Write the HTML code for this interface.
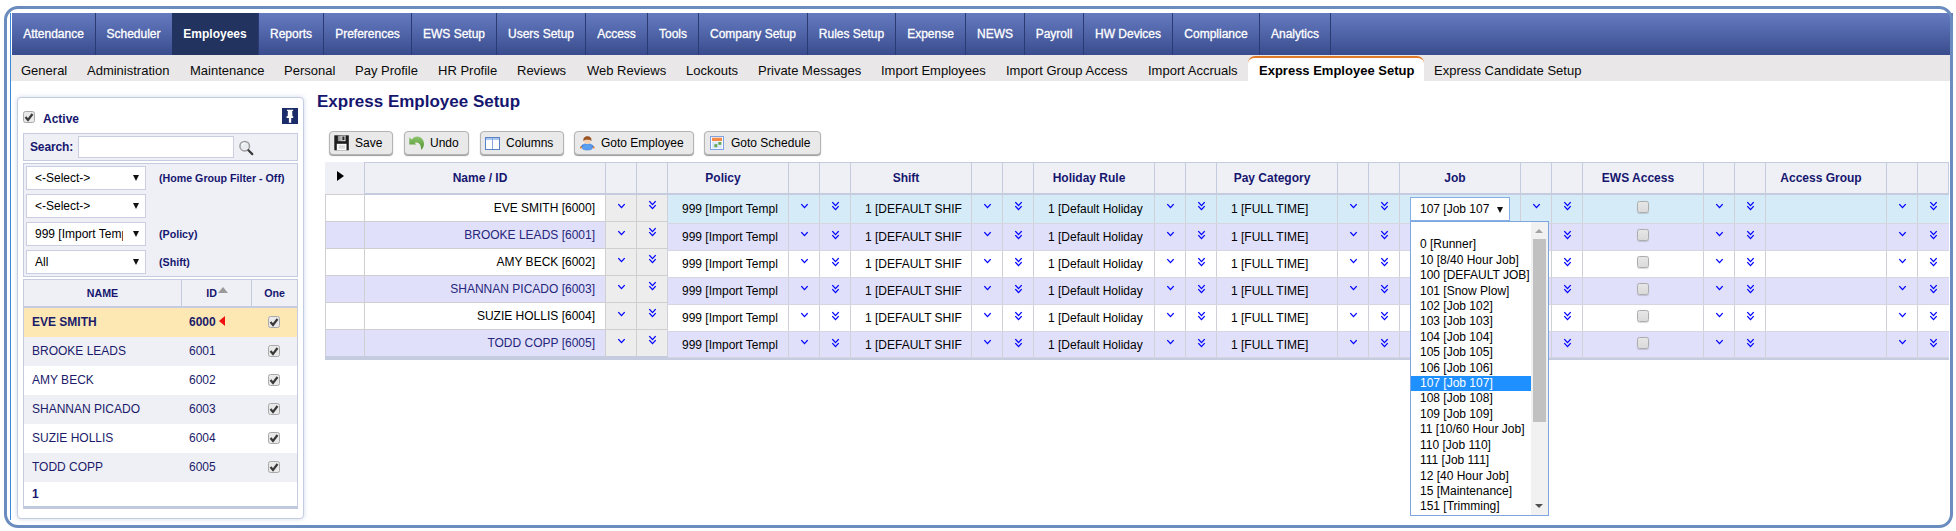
<!DOCTYPE html><html><head><meta charset="utf-8"><title>Express Employee Setup</title><style>html,body{margin:0;padding:0;background:#fff;}
body{width:1956px;height:531px;overflow:hidden;position:relative;font-family:"Liberation Sans",Arial,sans-serif;font-size:12px;color:#222;}
div,span,i,b{box-sizing:border-box;}
#frame{position:absolute;left:4px;top:6px;width:1949px;height:522px;border:3px solid #6b8cbf;border-radius:14px;z-index:50;pointer-events:none;}
#inline{position:absolute;left:10px;top:13px;width:1px;height:507px;background:#3a8ad8;}
#nav{position:absolute;left:12px;top:13px;width:1941px;height:42px;background:linear-gradient(#667bbf,#5468ad 40%,#394c8d);}
#nav div{position:absolute;top:0;height:42px;line-height:42px;text-align:center;color:#fff;font-size:12px;-webkit-text-stroke:0.3px #fff;border-right:1px solid #2a3a73;box-sizing:content-box;}
#nav div.on{background:#22335f;font-weight:bold;-webkit-text-stroke:0;}
#sub{position:absolute;left:11px;top:55px;width:1939px;height:26px;background:#e9e7e7;}
#sub span{position:absolute;top:2px;line-height:27px;font-size:13px;color:#0a0a0a;white-space:nowrap;}
#sub span.b{font-weight:bold;color:#000;}
#sub .act{position:absolute;left:1237px;top:1px;width:176px;height:25px;background:#fff;border-top:2px solid #e17a26;border-radius:7px 7px 0 0;}
#title{position:absolute;left:317px;top:91px;font-size:17px;font-weight:bold;color:#16166f;line-height:22px;white-space:nowrap;}
/* left panel */
#panel{position:absolute;left:17px;top:97px;width:287px;height:422px;border:1px solid #c3cce0;border-radius:4px;box-shadow:0 0 5px rgba(170,182,212,0.55);background:#fff;}
.navy{color:#16166f;font-weight:bold;}
#act{position:absolute;left:43px;top:112px;line-height:15px;font-size:12px;}
#actcb{position:absolute;left:23px;top:111px;}
#pin{position:absolute;left:282px;top:108px;width:16px;height:16px;background:#1c2c6a;}
#srch{position:absolute;left:23px;top:133px;width:275px;height:28px;background:#eff0f6;border:1px solid #c5cce0;}
#srch span{position:absolute;left:6px;top:6px;line-height:15px;letter-spacing:-0.15px;}
#srch .in{position:absolute;left:54px;top:2px;width:156px;height:22px;background:#fff;border:1px solid #c9cfe0;}
#filt{position:absolute;left:23px;top:163px;width:275px;height:114px;background:#eff0f6;border:1px solid #c5cce0;}
.sel1{position:absolute;left:2px;width:120px;height:24px;background:#fff;border:1px solid #c9cfe0;font-size:12px;line-height:23px;padding-left:8px;color:#000;white-space:nowrap;overflow:hidden;}
.sel1 i{position:absolute;right:6px;top:8px;width:0;height:0;border-left:3.5px solid transparent;border-right:3.5px solid transparent;border-top:6px solid #111;}
.sel1 u{position:absolute;right:13px;top:0;width:9px;height:21px;background:#fff;}
.flab{position:absolute;left:135px;font-size:8pt;line-height:14px;white-space:nowrap;}
#list{position:absolute;left:23px;top:279px;width:275px;height:230px;border:1px solid #c5cce0;border-bottom:3px solid #c0c9dd;background:#fff;}
.lh{position:absolute;left:0;top:0;width:273px;height:28px;background:#eff0f6;border-bottom:2px solid #c5cce0;font-size:8pt;font-weight:bold;color:#16166f;}
.lh div{position:absolute;top:0;height:26px;line-height:27px;text-align:center;border-right:1px solid #c5cce0;}
.lh .c1{left:0;width:158px;}
.lh .c2{left:158px;width:70px;}
.lh .c3{left:228px;width:45px;border-right:0;}
.lh .up{display:inline-block;width:0;height:0;border-left:5px solid transparent;border-right:5px solid transparent;border-bottom:6px solid #9a9a9a;position:relative;top:-4px;left:1px;}
.lr{position:absolute;left:0;width:273px;height:29px;line-height:29px;font-size:12px;color:#1b1b6a;}
.lr.alt{background:#eff0f6;}
.lr.sel{background:#fde8b4;font-weight:bold;}
.lr .n{position:absolute;left:8px;white-space:nowrap;}
.lr .d{position:absolute;left:165px;}
.lr .ck{position:absolute;left:244px;top:0;}
.lr .chk{position:absolute;top:8px;left:0;}
.lr .red{display:inline-block;width:0;height:0;border-top:5.5px solid transparent;border-bottom:5.5px solid transparent;border-right:6px solid #f01010;position:relative;top:-0.5px;left:3px;}
.lf{position:absolute;left:8px;top:202px;line-height:24px;font-weight:bold;color:#16166f;}
/* toolbar */
.btn{position:absolute;top:131px;height:24px;background:#e9e9e9;border:1px solid #b4b4b4;border-radius:4px;box-shadow:0 1px 1px #9a9a9a;font-size:12px;line-height:22px;color:#000;white-space:nowrap;}
.btn span{position:absolute;top:0;}
.btn svg{position:absolute;}
/* grid */
#grid{position:absolute;left:325px;top:162px;width:1624px;height:200px;}
.gh{position:absolute;top:0;height:33px;background:#eff0f6;border-left:1px solid #c5cce0;border-top:1px solid #c5cce0;border-bottom:2px solid #c5cce0;text-align:center;font-weight:bold;color:#16166f;line-height:30px;font-size:12px;padding-right:10px;}
.ghend{position:absolute;left:1623px;top:0;width:1px;height:33px;background:#c5cce0;}
.tri{position:absolute;left:12px;top:9px;width:0;height:0;border-top:5.5px solid transparent;border-bottom:5.5px solid transparent;border-left:7px solid #000;}
.lrow{position:absolute;left:0;width:342px;height:27px;}
.lrow div{position:absolute;top:0;height:27px;border-left:1px solid #cfcfd2;border-bottom:1px solid #cfcfd2;background:#fff;}
.lrow.alt div{background:#e0e0fb;}
.lrow .a0{left:0;width:39px;}
.lrow .a1{left:39px;width:241px;text-align:right;padding-right:10px;line-height:27px;color:#000;white-space:nowrap;}
.lrow.alt .a1{color:#26267a;}
.lrow .a2{left:280px;width:31px;background:#ededed !important;}
.lrow .a3{left:311px;width:31px;background:#ededed !important;}
.ch{position:absolute;left:11px;top:8px;}
.ch2{position:absolute;left:11px;top:5.4px;}
.rrow{position:absolute;left:342px;width:1282px;background:#fff;border-bottom:1px solid #d6d6e2;}
.rrow.alt{background:#e0e0fb;}
.rrow.sel{background:#d5ecf8;}
.rrow .m{position:absolute;top:0;bottom:0;width:121px;border-left:1px solid #d0d0d8;}
.rrow .c{position:absolute;top:0;bottom:0;width:31px;border-left:1px solid #d0d0d8;}
.rrow .c .ch{top:7.2px;}
.rrow.sel .c .ch{top:8.2px;}
.rrow .c .ch2{top:5.5px;}
.rrow.sel .c .ch2{top:6.4px;}
.rrow .v{position:absolute;left:14px;top:5px;width:97px;overflow:hidden;white-space:nowrap;line-height:16px;color:#000;}
.cb{position:absolute;left:54px;top:5px;width:12px;height:12px;border:1px solid #adadad;border-radius:2.500px;background:linear-gradient(#e6e6e6,#dadada);box-shadow:0 0.5px 1px rgba(0,0,0,0.15);}
.gbot{position:absolute;left:0;top:194px;width:343px;height:4px;background:#c5cce0;}
.gbot2{position:absolute;left:342px;top:196px;width:1282px;height:2px;background:#c5cce0;}
/* job select */
#jobsel{position:absolute;left:1410px;top:197px;width:100px;height:24px;background:#fff;border:1px solid #86aee6;font-size:12px;line-height:22px;color:#000;white-space:nowrap;overflow:hidden;}
#jobsel span{position:absolute;left:9px;top:0;}
#jobsel i{position:absolute;right:6px;top:9px;width:0;height:0;border-left:3.5px solid transparent;border-right:3.5px solid transparent;border-top:6px solid #111;}
#dd{position:absolute;left:1410px;top:221px;width:139px;height:295px;background:#fff;border:1px solid #7ea6de;z-index:60;}
#dd .opts{position:absolute;left:0;top:0px;width:121px;}
#dd .opts div{height:15.41px;line-height:15.41px;padding-left:9px;color:#000;white-space:nowrap;font-size:12px;}
#dd .opts div.hi{background:#1e90ff;color:#fff;}
#dd .sb{position:absolute;right:0;top:0;width:17px;height:293px;background:#f1f1f1;}
#dd .sb b{position:absolute;left:2px;top:17px;width:13px;height:183px;background:#c1c1c1;}
#dd .sb .u{position:absolute;left:4px;top:7px;width:0;height:0;border-left:4px solid transparent;border-right:4px solid transparent;border-bottom:4px solid #a3a3a3;}
#dd .sb .dn{position:absolute;left:4px;bottom:7px;width:0;height:0;border-left:4px solid transparent;border-right:4px solid transparent;border-top:4px solid #505050;}
.rrow.sel .v{top:6px;}
.rrow.sel .cb{top:6px;}
.gtl{position:absolute;left:0;top:32px;width:39px;height:1px;background:#cfcfd2;}
</style></head><body>
<div id="frame"></div><div id="inline"></div>
<div id="nav">
<div style="left:0px;width:83px">Attendance</div>
<div style="left:84px;width:75px;border-right-color:transparent">Scheduler</div>
<div class="on" style="left:160px;width:86px">Employees</div>
<div style="left:247px;width:64px">Reports</div>
<div style="left:312px;width:87px">Preferences</div>
<div style="left:400px;width:84px">EWS Setup</div>
<div style="left:485px;width:88px">Users Setup</div>
<div style="left:574px;width:61px">Access</div>
<div style="left:636px;width:50px">Tools</div>
<div style="left:687px;width:108px">Company Setup</div>
<div style="left:796px;width:87px">Rules Setup</div>
<div style="left:884px;width:69px">Expense</div>
<div style="left:954px;width:58px">NEWS</div>
<div style="left:1013px;width:58px">Payroll</div>
<div style="left:1072px;width:88px">HW Devices</div>
<div style="left:1161px;width:86px">Compliance</div>
<div style="left:1248px;width:70px">Analytics</div>
</div>
<div id="frameR"></div>
<div id="sub">
<div class="act"></div>
<span style="left:10px">General</span>
<span style="left:76px">Administration</span>
<span style="left:179px">Maintenance</span>
<span style="left:273px">Personal</span>
<span style="left:344px">Pay Profile</span>
<span style="left:427px">HR Profile</span>
<span style="left:506px">Reviews</span>
<span style="left:576px">Web Reviews</span>
<span style="left:675px">Lockouts</span>
<span style="left:747px">Private Messages</span>
<span style="left:870px">Import Employees</span>
<span style="left:995px">Import Group Access</span>
<span style="left:1137px">Import Accruals</span>
<span class="b" style="left:1248px">Express Employee Setup</span>
<span style="left:1423px">Express Candidate Setup</span>
</div>
<div id="title">Express Employee Setup</div>
<div id="panel"></div>
<svg id="actcb" width="12" height="12" viewBox="0 0 12 12"><rect x="0.5" y="0.5" width="11" height="11" rx="2" fill="#e9e9e9" stroke="#a9a9a9"/><path d="M2.500 6L5 9L9.500 3" fill="none" stroke="#3a3a3a" stroke-width="2.200"/></svg>
<div id="act" class="navy">Active</div>
<div id="pin"><svg width="16" height="16" viewBox="0 0 16 16"><path d="M5 1.800h6.100v1.200h-0.900l0.200 5.200h0.800v1.700h-2v4.900h-2.300v-4.900h-2.300v-1.700h1.100l0.200 -5.200h-0.900z" fill="#fff"/></svg></div>
<div id="srch"><span class="navy">Search:</span><div class="in"></div>
<svg style="position:absolute;left:213px;top:4px" width="19" height="19" viewBox="0 0 19 19"><circle cx="7.700" cy="8.200" r="4.800" fill="#e8ecee" stroke="#9c9c9c" stroke-width="1.500"/><path d="M5 7.500a3 3 0 0 1 3 -2.500" stroke="#fff" stroke-width="1.200" fill="none"/><path d="M11.400 12.200L15.300 16.100" stroke="#3a3a3a" stroke-width="2.200" stroke-linecap="round"/></svg></div>
<div id="filt">
<div class="sel1" style="top:2px">&lt;-Select-&gt;<i></i></div><div class="flab navy" style="top:7px">(Home Group Filter - Off)</div>
<div class="sel1" style="top:30px">&lt;-Select-&gt;<i></i></div>
<div class="sel1" style="top:58px">999 [Import Templ<u></u><i></i></div><div class="flab navy" style="top:63px">(Policy)</div>
<div class="sel1" style="top:86px">All<i></i></div><div class="flab navy" style="top:91px">(Shift)</div>
</div>

<div id="list">
<div class="lh"><div class="c1">NAME</div><div class="c2">ID<i class="up"></i></div><div class="c3">One</div></div>
<div class="lr sel" style="top:28px"><span class="n">EVE SMITH</span><span class="d">6000<i class="red"></i></span><span class="ck"><svg class="chk" width="12" height="12" viewBox="0 0 12 12"><rect x="0.5" y="0.5" width="11" height="11" rx="2" fill="#e9e9e9" stroke="#a9a9a9"/><path d="M2.500 6L5 9L9.500 3" fill="none" stroke="#3a3a3a" stroke-width="2.200"/></svg></span></div>
<div class="lr alt" style="top:57px"><span class="n">BROOKE LEADS</span><span class="d">6001</span><span class="ck"><svg class="chk" width="12" height="12" viewBox="0 0 12 12"><rect x="0.5" y="0.5" width="11" height="11" rx="2" fill="#e9e9e9" stroke="#a9a9a9"/><path d="M2.500 6L5 9L9.500 3" fill="none" stroke="#3a3a3a" stroke-width="2.200"/></svg></span></div>
<div class="lr" style="top:86px"><span class="n">AMY BECK</span><span class="d">6002</span><span class="ck"><svg class="chk" width="12" height="12" viewBox="0 0 12 12"><rect x="0.5" y="0.5" width="11" height="11" rx="2" fill="#e9e9e9" stroke="#a9a9a9"/><path d="M2.500 6L5 9L9.500 3" fill="none" stroke="#3a3a3a" stroke-width="2.200"/></svg></span></div>
<div class="lr alt" style="top:115px"><span class="n">SHANNAN PICADO</span><span class="d">6003</span><span class="ck"><svg class="chk" width="12" height="12" viewBox="0 0 12 12"><rect x="0.5" y="0.5" width="11" height="11" rx="2" fill="#e9e9e9" stroke="#a9a9a9"/><path d="M2.500 6L5 9L9.500 3" fill="none" stroke="#3a3a3a" stroke-width="2.200"/></svg></span></div>
<div class="lr" style="top:144px"><span class="n">SUZIE HOLLIS</span><span class="d">6004</span><span class="ck"><svg class="chk" width="12" height="12" viewBox="0 0 12 12"><rect x="0.5" y="0.5" width="11" height="11" rx="2" fill="#e9e9e9" stroke="#a9a9a9"/><path d="M2.500 6L5 9L9.500 3" fill="none" stroke="#3a3a3a" stroke-width="2.200"/></svg></span></div>
<div class="lr alt" style="top:173px"><span class="n">TODD COPP</span><span class="d">6005</span><span class="ck"><svg class="chk" width="12" height="12" viewBox="0 0 12 12"><rect x="0.5" y="0.5" width="11" height="11" rx="2" fill="#e9e9e9" stroke="#a9a9a9"/><path d="M2.500 6L5 9L9.500 3" fill="none" stroke="#3a3a3a" stroke-width="2.200"/></svg></span></div>
<div class="lf">1</div>
</div>
<div class="btn" style="left:329px;width:64px"><svg style="left:4px;top:3px" width="15" height="16" viewBox="0 0 15 16"><defs><linearGradient id="fm" x1="0" x2="1"><stop offset="0" stop-color="#8a8a8a"/><stop offset="1" stop-color="#f2f2f2"/></linearGradient></defs><rect x="0.300" y="0.300" width="14.500" height="15" fill="#1d1d1d"/><rect x="3.800" y="0.600" width="7.700" height="5.600" fill="url(#fm)"/><rect x="8.400" y="1.500" width="2.100" height="3.600" fill="#2a2a2a"/><rect x="2.800" y="8.800" width="9.700" height="6.500" fill="#fbfbfb"/><rect x="4.900" y="10.300" width="6.100" height="3.400" fill="#dcdcdc"/></svg><span style="left:25px">Save</span></div>
<div class="btn" style="left:404px;width:65px"><svg style="left:4px;top:4px" width="16" height="15" viewBox="0 0 16 15"><defs><linearGradient id="ug" x1="0" y1="0" x2="0" y2="1"><stop offset="0" stop-color="#8cc56c"/><stop offset="1" stop-color="#4f8f2f"/></linearGradient></defs><path d="M0.300 1.200L0.300 8.600L7.400 8.600L5.700 6.900C9 5.600 12.300 8 12.200 13.900C16.200 10.200 15.800 4.200 11.600 1.500C8.500 -0.400 5 0.500 2.700 3.600Z" fill="url(#ug)"/></svg><span style="left:25px">Undo</span></div>
<div class="btn" style="left:480px;width:84px"><svg style="left:4px;top:5px" width="15" height="13" viewBox="0 0 15 13"><rect x="0.500" y="0.500" width="14" height="12" fill="#fff" stroke="#5a82c4"/><rect x="1" y="1" width="13" height="2" fill="#a9c6f2"/><path d="M7.500 1v11" stroke="#88a8dc"/></svg><span style="left:25px">Columns</span></div>
<div class="btn" style="left:574px;width:120px"><svg style="left:5px;top:4px" width="15" height="15" viewBox="0 0 15 15"><path d="M3.300 8.800L0.900 11.500M11.400 8.800L13.700 11.500" stroke="#3b6fd0" stroke-width="1.300" fill="none"/><circle cx="0.900" cy="11.500" r="1.100" fill="#e88a3a"/><circle cx="13.700" cy="11.500" r="1.100" fill="#e88a3a"/><path d="M2.300 11.600C2.300 8.400 4.500 7.600 7.300 7.600C10.200 7.600 12.400 8.400 12.400 11.600C12.400 13.700 10 14 7.300 14C4.600 14 2.300 13.700 2.300 11.600z" fill="#5a9ff0" stroke="#3f78d8" stroke-width="0.600"/><ellipse cx="7.400" cy="5" rx="3.300" ry="3.100" fill="#f6d2b4"/><path d="M3.400 5.200C2.900 1.600 5 0.200 7.400 0.200C10 0.200 12 1.600 11.400 5.200C10.600 3.400 4.400 3.400 3.400 5.200z" fill="#9a5524"/></svg><span style="left:26px">Goto Employee</span></div>
<div class="btn" style="left:704px;width:117px"><svg style="left:5px;top:4px" width="14" height="14" viewBox="0 0 14 14"><rect x="0.500" y="0.500" width="13" height="13" fill="#fdfdff" stroke="#7ea3e2"/><rect x="2" y="5.500" width="10" height="7" fill="#dfe8f8"/><rect x="2" y="1.700" width="10" height="3.300" fill="#f58a48"/><rect x="8.300" y="6" width="3" height="2.800" fill="#62aa52"/><rect x="4.300" y="8.200" width="3" height="3" fill="#62aa52"/></svg><span style="left:26px">Goto Schedule</span></div>

<div id="grid">
<div class="gh" style="left:0;width:39px;border:0;height:33px"><i class="tri"></i></div>
<div class="gh" style="left:39px;width:241px">Name / ID</div>
<div class="gh" style="left:280px;width:31px"></div>
<div class="gh" style="left:311px;width:31px"></div>
<div class="gh" style="left:342px;width:121px">Policy</div>
<div class="gh" style="left:463px;width:31px"></div>
<div class="gh" style="left:494px;width:31px"></div>
<div class="gh" style="left:525px;width:121px">Shift</div>
<div class="gh" style="left:646px;width:31px"></div>
<div class="gh" style="left:677px;width:31px"></div>
<div class="gh" style="left:708px;width:121px">Holiday Rule</div>
<div class="gh" style="left:829px;width:31px"></div>
<div class="gh" style="left:860px;width:31px"></div>
<div class="gh" style="left:891px;width:121px">Pay Category</div>
<div class="gh" style="left:1012px;width:31px"></div>
<div class="gh" style="left:1043px;width:31px"></div>
<div class="gh" style="left:1074px;width:121px">Job</div>
<div class="gh" style="left:1195px;width:31px"></div>
<div class="gh" style="left:1226px;width:31px"></div>
<div class="gh" style="left:1257px;width:121px">EWS Access</div>
<div class="gh" style="left:1378px;width:31px"></div>
<div class="gh" style="left:1409px;width:31px"></div>
<div class="gh" style="left:1440px;width:121px">Access Group</div>
<div class="gh" style="left:1561px;width:31px"></div>
<div class="gh" style="left:1592px;width:31px"></div>
<div class="ghend"></div><div class="gtl"></div>
<div class="lrow" style="top:33px"><div class="a0"></div><div class="a1">EVE SMITH [6000]</div><div class="a2"><svg class="ch" width="9" height="6" viewBox="0 0 9 6"><path d="M1.300 1.100L4.500 4.600L7.700 1.100" fill="none" stroke="#0000ff" stroke-width="1.350"/></svg></div><div class="a3"><svg class="ch2" width="9" height="10" viewBox="0 0 9 10"><path d="M1.300 1.100L4.500 4.600L7.700 1.100M1.300 5.100L4.500 8.600L7.700 5.100" fill="none" stroke="#0000ff" stroke-width="1.350"/></svg></div></div>
<div class="lrow alt" style="top:60px"><div class="a0"></div><div class="a1">BROOKE LEADS [6001]</div><div class="a2"><svg class="ch" width="9" height="6" viewBox="0 0 9 6"><path d="M1.300 1.100L4.500 4.600L7.700 1.100" fill="none" stroke="#0000ff" stroke-width="1.350"/></svg></div><div class="a3"><svg class="ch2" width="9" height="10" viewBox="0 0 9 10"><path d="M1.300 1.100L4.500 4.600L7.700 1.100M1.300 5.100L4.500 8.600L7.700 5.100" fill="none" stroke="#0000ff" stroke-width="1.350"/></svg></div></div>
<div class="lrow" style="top:87px"><div class="a0"></div><div class="a1">AMY BECK [6002]</div><div class="a2"><svg class="ch" width="9" height="6" viewBox="0 0 9 6"><path d="M1.300 1.100L4.500 4.600L7.700 1.100" fill="none" stroke="#0000ff" stroke-width="1.350"/></svg></div><div class="a3"><svg class="ch2" width="9" height="10" viewBox="0 0 9 10"><path d="M1.300 1.100L4.500 4.600L7.700 1.100M1.300 5.100L4.500 8.600L7.700 5.100" fill="none" stroke="#0000ff" stroke-width="1.350"/></svg></div></div>
<div class="lrow alt" style="top:114px"><div class="a0"></div><div class="a1">SHANNAN PICADO [6003]</div><div class="a2"><svg class="ch" width="9" height="6" viewBox="0 0 9 6"><path d="M1.300 1.100L4.500 4.600L7.700 1.100" fill="none" stroke="#0000ff" stroke-width="1.350"/></svg></div><div class="a3"><svg class="ch2" width="9" height="10" viewBox="0 0 9 10"><path d="M1.300 1.100L4.500 4.600L7.700 1.100M1.300 5.100L4.500 8.600L7.700 5.100" fill="none" stroke="#0000ff" stroke-width="1.350"/></svg></div></div>
<div class="lrow" style="top:141px"><div class="a0"></div><div class="a1">SUZIE HOLLIS [6004]</div><div class="a2"><svg class="ch" width="9" height="6" viewBox="0 0 9 6"><path d="M1.300 1.100L4.500 4.600L7.700 1.100" fill="none" stroke="#0000ff" stroke-width="1.350"/></svg></div><div class="a3"><svg class="ch2" width="9" height="10" viewBox="0 0 9 10"><path d="M1.300 1.100L4.500 4.600L7.700 1.100M1.300 5.100L4.500 8.600L7.700 5.100" fill="none" stroke="#0000ff" stroke-width="1.350"/></svg></div></div>
<div class="lrow alt" style="top:168px"><div class="a0"></div><div class="a1">TODD COPP [6005]</div><div class="a2"><svg class="ch" width="9" height="6" viewBox="0 0 9 6"><path d="M1.300 1.100L4.500 4.600L7.700 1.100" fill="none" stroke="#0000ff" stroke-width="1.350"/></svg></div><div class="a3"><svg class="ch2" width="9" height="10" viewBox="0 0 9 10"><path d="M1.300 1.100L4.500 4.600L7.700 1.100M1.300 5.100L4.500 8.600L7.700 5.100" fill="none" stroke="#0000ff" stroke-width="1.350"/></svg></div></div>
<div class="rrow sel" style="top:33px;height:29px">
<div class="m" style="left:0px"><span class="v">999 [Import Templ</span></div><div class="c" style="left:121px"><svg class="ch" width="9" height="6" viewBox="0 0 9 6"><path d="M1.300 1.100L4.500 4.600L7.700 1.100" fill="none" stroke="#0000ff" stroke-width="1.350"/></svg></div><div class="c" style="left:152px"><svg class="ch2" width="9" height="10" viewBox="0 0 9 10"><path d="M1.300 1.100L4.500 4.600L7.700 1.100M1.300 5.100L4.500 8.600L7.700 5.100" fill="none" stroke="#0000ff" stroke-width="1.350"/></svg></div>
<div class="m" style="left:183px"><span class="v">1 [DEFAULT SHIF</span></div><div class="c" style="left:304px"><svg class="ch" width="9" height="6" viewBox="0 0 9 6"><path d="M1.300 1.100L4.500 4.600L7.700 1.100" fill="none" stroke="#0000ff" stroke-width="1.350"/></svg></div><div class="c" style="left:335px"><svg class="ch2" width="9" height="10" viewBox="0 0 9 10"><path d="M1.300 1.100L4.500 4.600L7.700 1.100M1.300 5.100L4.500 8.600L7.700 5.100" fill="none" stroke="#0000ff" stroke-width="1.350"/></svg></div>
<div class="m" style="left:366px"><span class="v">1 [Default Holiday</span></div><div class="c" style="left:487px"><svg class="ch" width="9" height="6" viewBox="0 0 9 6"><path d="M1.300 1.100L4.500 4.600L7.700 1.100" fill="none" stroke="#0000ff" stroke-width="1.350"/></svg></div><div class="c" style="left:518px"><svg class="ch2" width="9" height="10" viewBox="0 0 9 10"><path d="M1.300 1.100L4.500 4.600L7.700 1.100M1.300 5.100L4.500 8.600L7.700 5.100" fill="none" stroke="#0000ff" stroke-width="1.350"/></svg></div>
<div class="m" style="left:549px"><span class="v">1 [FULL TIME]</span></div><div class="c" style="left:670px"><svg class="ch" width="9" height="6" viewBox="0 0 9 6"><path d="M1.300 1.100L4.500 4.600L7.700 1.100" fill="none" stroke="#0000ff" stroke-width="1.350"/></svg></div><div class="c" style="left:701px"><svg class="ch2" width="9" height="10" viewBox="0 0 9 10"><path d="M1.300 1.100L4.500 4.600L7.700 1.100M1.300 5.100L4.500 8.600L7.700 5.100" fill="none" stroke="#0000ff" stroke-width="1.350"/></svg></div>
<div class="m" style="left:732px"></div><div class="c" style="left:853px"><svg class="ch" width="9" height="6" viewBox="0 0 9 6"><path d="M1.300 1.100L4.500 4.600L7.700 1.100" fill="none" stroke="#0000ff" stroke-width="1.350"/></svg></div><div class="c" style="left:884px"><svg class="ch2" width="9" height="10" viewBox="0 0 9 10"><path d="M1.300 1.100L4.500 4.600L7.700 1.100M1.300 5.100L4.500 8.600L7.700 5.100" fill="none" stroke="#0000ff" stroke-width="1.350"/></svg></div>
<div class="m" style="left:915px"><i class="cb"></i></div><div class="c" style="left:1036px"><svg class="ch" width="9" height="6" viewBox="0 0 9 6"><path d="M1.300 1.100L4.500 4.600L7.700 1.100" fill="none" stroke="#0000ff" stroke-width="1.350"/></svg></div><div class="c" style="left:1067px"><svg class="ch2" width="9" height="10" viewBox="0 0 9 10"><path d="M1.300 1.100L4.500 4.600L7.700 1.100M1.300 5.100L4.500 8.600L7.700 5.100" fill="none" stroke="#0000ff" stroke-width="1.350"/></svg></div>
<div class="m" style="left:1098px"><span class="v"></span></div><div class="c" style="left:1219px"><svg class="ch" width="9" height="6" viewBox="0 0 9 6"><path d="M1.300 1.100L4.500 4.600L7.700 1.100" fill="none" stroke="#0000ff" stroke-width="1.350"/></svg></div><div class="c" style="left:1250px"><svg class="ch2" width="9" height="10" viewBox="0 0 9 10"><path d="M1.300 1.100L4.500 4.600L7.700 1.100M1.300 5.100L4.500 8.600L7.700 5.100" fill="none" stroke="#0000ff" stroke-width="1.350"/></svg></div>
</div>
<div class="rrow alt" style="top:62px;height:27px">
<div class="m" style="left:0px"><span class="v">999 [Import Templ</span></div><div class="c" style="left:121px"><svg class="ch" width="9" height="6" viewBox="0 0 9 6"><path d="M1.300 1.100L4.500 4.600L7.700 1.100" fill="none" stroke="#0000ff" stroke-width="1.350"/></svg></div><div class="c" style="left:152px"><svg class="ch2" width="9" height="10" viewBox="0 0 9 10"><path d="M1.300 1.100L4.500 4.600L7.700 1.100M1.300 5.100L4.500 8.600L7.700 5.100" fill="none" stroke="#0000ff" stroke-width="1.350"/></svg></div>
<div class="m" style="left:183px"><span class="v">1 [DEFAULT SHIF</span></div><div class="c" style="left:304px"><svg class="ch" width="9" height="6" viewBox="0 0 9 6"><path d="M1.300 1.100L4.500 4.600L7.700 1.100" fill="none" stroke="#0000ff" stroke-width="1.350"/></svg></div><div class="c" style="left:335px"><svg class="ch2" width="9" height="10" viewBox="0 0 9 10"><path d="M1.300 1.100L4.500 4.600L7.700 1.100M1.300 5.100L4.500 8.600L7.700 5.100" fill="none" stroke="#0000ff" stroke-width="1.350"/></svg></div>
<div class="m" style="left:366px"><span class="v">1 [Default Holiday</span></div><div class="c" style="left:487px"><svg class="ch" width="9" height="6" viewBox="0 0 9 6"><path d="M1.300 1.100L4.500 4.600L7.700 1.100" fill="none" stroke="#0000ff" stroke-width="1.350"/></svg></div><div class="c" style="left:518px"><svg class="ch2" width="9" height="10" viewBox="0 0 9 10"><path d="M1.300 1.100L4.500 4.600L7.700 1.100M1.300 5.100L4.500 8.600L7.700 5.100" fill="none" stroke="#0000ff" stroke-width="1.350"/></svg></div>
<div class="m" style="left:549px"><span class="v">1 [FULL TIME]</span></div><div class="c" style="left:670px"><svg class="ch" width="9" height="6" viewBox="0 0 9 6"><path d="M1.300 1.100L4.500 4.600L7.700 1.100" fill="none" stroke="#0000ff" stroke-width="1.350"/></svg></div><div class="c" style="left:701px"><svg class="ch2" width="9" height="10" viewBox="0 0 9 10"><path d="M1.300 1.100L4.500 4.600L7.700 1.100M1.300 5.100L4.500 8.600L7.700 5.100" fill="none" stroke="#0000ff" stroke-width="1.350"/></svg></div>
<div class="m" style="left:732px"></div><div class="c" style="left:853px"><svg class="ch" width="9" height="6" viewBox="0 0 9 6"><path d="M1.300 1.100L4.500 4.600L7.700 1.100" fill="none" stroke="#0000ff" stroke-width="1.350"/></svg></div><div class="c" style="left:884px"><svg class="ch2" width="9" height="10" viewBox="0 0 9 10"><path d="M1.300 1.100L4.500 4.600L7.700 1.100M1.300 5.100L4.500 8.600L7.700 5.100" fill="none" stroke="#0000ff" stroke-width="1.350"/></svg></div>
<div class="m" style="left:915px"><i class="cb"></i></div><div class="c" style="left:1036px"><svg class="ch" width="9" height="6" viewBox="0 0 9 6"><path d="M1.300 1.100L4.500 4.600L7.700 1.100" fill="none" stroke="#0000ff" stroke-width="1.350"/></svg></div><div class="c" style="left:1067px"><svg class="ch2" width="9" height="10" viewBox="0 0 9 10"><path d="M1.300 1.100L4.500 4.600L7.700 1.100M1.300 5.100L4.500 8.600L7.700 5.100" fill="none" stroke="#0000ff" stroke-width="1.350"/></svg></div>
<div class="m" style="left:1098px"><span class="v"></span></div><div class="c" style="left:1219px"><svg class="ch" width="9" height="6" viewBox="0 0 9 6"><path d="M1.300 1.100L4.500 4.600L7.700 1.100" fill="none" stroke="#0000ff" stroke-width="1.350"/></svg></div><div class="c" style="left:1250px"><svg class="ch2" width="9" height="10" viewBox="0 0 9 10"><path d="M1.300 1.100L4.500 4.600L7.700 1.100M1.300 5.100L4.500 8.600L7.700 5.100" fill="none" stroke="#0000ff" stroke-width="1.350"/></svg></div>
</div>
<div class="rrow" style="top:89px;height:27px">
<div class="m" style="left:0px"><span class="v">999 [Import Templ</span></div><div class="c" style="left:121px"><svg class="ch" width="9" height="6" viewBox="0 0 9 6"><path d="M1.300 1.100L4.500 4.600L7.700 1.100" fill="none" stroke="#0000ff" stroke-width="1.350"/></svg></div><div class="c" style="left:152px"><svg class="ch2" width="9" height="10" viewBox="0 0 9 10"><path d="M1.300 1.100L4.500 4.600L7.700 1.100M1.300 5.100L4.500 8.600L7.700 5.100" fill="none" stroke="#0000ff" stroke-width="1.350"/></svg></div>
<div class="m" style="left:183px"><span class="v">1 [DEFAULT SHIF</span></div><div class="c" style="left:304px"><svg class="ch" width="9" height="6" viewBox="0 0 9 6"><path d="M1.300 1.100L4.500 4.600L7.700 1.100" fill="none" stroke="#0000ff" stroke-width="1.350"/></svg></div><div class="c" style="left:335px"><svg class="ch2" width="9" height="10" viewBox="0 0 9 10"><path d="M1.300 1.100L4.500 4.600L7.700 1.100M1.300 5.100L4.500 8.600L7.700 5.100" fill="none" stroke="#0000ff" stroke-width="1.350"/></svg></div>
<div class="m" style="left:366px"><span class="v">1 [Default Holiday</span></div><div class="c" style="left:487px"><svg class="ch" width="9" height="6" viewBox="0 0 9 6"><path d="M1.300 1.100L4.500 4.600L7.700 1.100" fill="none" stroke="#0000ff" stroke-width="1.350"/></svg></div><div class="c" style="left:518px"><svg class="ch2" width="9" height="10" viewBox="0 0 9 10"><path d="M1.300 1.100L4.500 4.600L7.700 1.100M1.300 5.100L4.500 8.600L7.700 5.100" fill="none" stroke="#0000ff" stroke-width="1.350"/></svg></div>
<div class="m" style="left:549px"><span class="v">1 [FULL TIME]</span></div><div class="c" style="left:670px"><svg class="ch" width="9" height="6" viewBox="0 0 9 6"><path d="M1.300 1.100L4.500 4.600L7.700 1.100" fill="none" stroke="#0000ff" stroke-width="1.350"/></svg></div><div class="c" style="left:701px"><svg class="ch2" width="9" height="10" viewBox="0 0 9 10"><path d="M1.300 1.100L4.500 4.600L7.700 1.100M1.300 5.100L4.500 8.600L7.700 5.100" fill="none" stroke="#0000ff" stroke-width="1.350"/></svg></div>
<div class="m" style="left:732px"></div><div class="c" style="left:853px"><svg class="ch" width="9" height="6" viewBox="0 0 9 6"><path d="M1.300 1.100L4.500 4.600L7.700 1.100" fill="none" stroke="#0000ff" stroke-width="1.350"/></svg></div><div class="c" style="left:884px"><svg class="ch2" width="9" height="10" viewBox="0 0 9 10"><path d="M1.300 1.100L4.500 4.600L7.700 1.100M1.300 5.100L4.500 8.600L7.700 5.100" fill="none" stroke="#0000ff" stroke-width="1.350"/></svg></div>
<div class="m" style="left:915px"><i class="cb"></i></div><div class="c" style="left:1036px"><svg class="ch" width="9" height="6" viewBox="0 0 9 6"><path d="M1.300 1.100L4.500 4.600L7.700 1.100" fill="none" stroke="#0000ff" stroke-width="1.350"/></svg></div><div class="c" style="left:1067px"><svg class="ch2" width="9" height="10" viewBox="0 0 9 10"><path d="M1.300 1.100L4.500 4.600L7.700 1.100M1.300 5.100L4.500 8.600L7.700 5.100" fill="none" stroke="#0000ff" stroke-width="1.350"/></svg></div>
<div class="m" style="left:1098px"><span class="v"></span></div><div class="c" style="left:1219px"><svg class="ch" width="9" height="6" viewBox="0 0 9 6"><path d="M1.300 1.100L4.500 4.600L7.700 1.100" fill="none" stroke="#0000ff" stroke-width="1.350"/></svg></div><div class="c" style="left:1250px"><svg class="ch2" width="9" height="10" viewBox="0 0 9 10"><path d="M1.300 1.100L4.500 4.600L7.700 1.100M1.300 5.100L4.500 8.600L7.700 5.100" fill="none" stroke="#0000ff" stroke-width="1.350"/></svg></div>
</div>
<div class="rrow alt" style="top:116px;height:27px">
<div class="m" style="left:0px"><span class="v">999 [Import Templ</span></div><div class="c" style="left:121px"><svg class="ch" width="9" height="6" viewBox="0 0 9 6"><path d="M1.300 1.100L4.500 4.600L7.700 1.100" fill="none" stroke="#0000ff" stroke-width="1.350"/></svg></div><div class="c" style="left:152px"><svg class="ch2" width="9" height="10" viewBox="0 0 9 10"><path d="M1.300 1.100L4.500 4.600L7.700 1.100M1.300 5.100L4.500 8.600L7.700 5.100" fill="none" stroke="#0000ff" stroke-width="1.350"/></svg></div>
<div class="m" style="left:183px"><span class="v">1 [DEFAULT SHIF</span></div><div class="c" style="left:304px"><svg class="ch" width="9" height="6" viewBox="0 0 9 6"><path d="M1.300 1.100L4.500 4.600L7.700 1.100" fill="none" stroke="#0000ff" stroke-width="1.350"/></svg></div><div class="c" style="left:335px"><svg class="ch2" width="9" height="10" viewBox="0 0 9 10"><path d="M1.300 1.100L4.500 4.600L7.700 1.100M1.300 5.100L4.500 8.600L7.700 5.100" fill="none" stroke="#0000ff" stroke-width="1.350"/></svg></div>
<div class="m" style="left:366px"><span class="v">1 [Default Holiday</span></div><div class="c" style="left:487px"><svg class="ch" width="9" height="6" viewBox="0 0 9 6"><path d="M1.300 1.100L4.500 4.600L7.700 1.100" fill="none" stroke="#0000ff" stroke-width="1.350"/></svg></div><div class="c" style="left:518px"><svg class="ch2" width="9" height="10" viewBox="0 0 9 10"><path d="M1.300 1.100L4.500 4.600L7.700 1.100M1.300 5.100L4.500 8.600L7.700 5.100" fill="none" stroke="#0000ff" stroke-width="1.350"/></svg></div>
<div class="m" style="left:549px"><span class="v">1 [FULL TIME]</span></div><div class="c" style="left:670px"><svg class="ch" width="9" height="6" viewBox="0 0 9 6"><path d="M1.300 1.100L4.500 4.600L7.700 1.100" fill="none" stroke="#0000ff" stroke-width="1.350"/></svg></div><div class="c" style="left:701px"><svg class="ch2" width="9" height="10" viewBox="0 0 9 10"><path d="M1.300 1.100L4.500 4.600L7.700 1.100M1.300 5.100L4.500 8.600L7.700 5.100" fill="none" stroke="#0000ff" stroke-width="1.350"/></svg></div>
<div class="m" style="left:732px"></div><div class="c" style="left:853px"><svg class="ch" width="9" height="6" viewBox="0 0 9 6"><path d="M1.300 1.100L4.500 4.600L7.700 1.100" fill="none" stroke="#0000ff" stroke-width="1.350"/></svg></div><div class="c" style="left:884px"><svg class="ch2" width="9" height="10" viewBox="0 0 9 10"><path d="M1.300 1.100L4.500 4.600L7.700 1.100M1.300 5.100L4.500 8.600L7.700 5.100" fill="none" stroke="#0000ff" stroke-width="1.350"/></svg></div>
<div class="m" style="left:915px"><i class="cb"></i></div><div class="c" style="left:1036px"><svg class="ch" width="9" height="6" viewBox="0 0 9 6"><path d="M1.300 1.100L4.500 4.600L7.700 1.100" fill="none" stroke="#0000ff" stroke-width="1.350"/></svg></div><div class="c" style="left:1067px"><svg class="ch2" width="9" height="10" viewBox="0 0 9 10"><path d="M1.300 1.100L4.500 4.600L7.700 1.100M1.300 5.100L4.500 8.600L7.700 5.100" fill="none" stroke="#0000ff" stroke-width="1.350"/></svg></div>
<div class="m" style="left:1098px"><span class="v"></span></div><div class="c" style="left:1219px"><svg class="ch" width="9" height="6" viewBox="0 0 9 6"><path d="M1.300 1.100L4.500 4.600L7.700 1.100" fill="none" stroke="#0000ff" stroke-width="1.350"/></svg></div><div class="c" style="left:1250px"><svg class="ch2" width="9" height="10" viewBox="0 0 9 10"><path d="M1.300 1.100L4.500 4.600L7.700 1.100M1.300 5.100L4.500 8.600L7.700 5.100" fill="none" stroke="#0000ff" stroke-width="1.350"/></svg></div>
</div>
<div class="rrow" style="top:143px;height:27px">
<div class="m" style="left:0px"><span class="v">999 [Import Templ</span></div><div class="c" style="left:121px"><svg class="ch" width="9" height="6" viewBox="0 0 9 6"><path d="M1.300 1.100L4.500 4.600L7.700 1.100" fill="none" stroke="#0000ff" stroke-width="1.350"/></svg></div><div class="c" style="left:152px"><svg class="ch2" width="9" height="10" viewBox="0 0 9 10"><path d="M1.300 1.100L4.500 4.600L7.700 1.100M1.300 5.100L4.500 8.600L7.700 5.100" fill="none" stroke="#0000ff" stroke-width="1.350"/></svg></div>
<div class="m" style="left:183px"><span class="v">1 [DEFAULT SHIF</span></div><div class="c" style="left:304px"><svg class="ch" width="9" height="6" viewBox="0 0 9 6"><path d="M1.300 1.100L4.500 4.600L7.700 1.100" fill="none" stroke="#0000ff" stroke-width="1.350"/></svg></div><div class="c" style="left:335px"><svg class="ch2" width="9" height="10" viewBox="0 0 9 10"><path d="M1.300 1.100L4.500 4.600L7.700 1.100M1.300 5.100L4.500 8.600L7.700 5.100" fill="none" stroke="#0000ff" stroke-width="1.350"/></svg></div>
<div class="m" style="left:366px"><span class="v">1 [Default Holiday</span></div><div class="c" style="left:487px"><svg class="ch" width="9" height="6" viewBox="0 0 9 6"><path d="M1.300 1.100L4.500 4.600L7.700 1.100" fill="none" stroke="#0000ff" stroke-width="1.350"/></svg></div><div class="c" style="left:518px"><svg class="ch2" width="9" height="10" viewBox="0 0 9 10"><path d="M1.300 1.100L4.500 4.600L7.700 1.100M1.300 5.100L4.500 8.600L7.700 5.100" fill="none" stroke="#0000ff" stroke-width="1.350"/></svg></div>
<div class="m" style="left:549px"><span class="v">1 [FULL TIME]</span></div><div class="c" style="left:670px"><svg class="ch" width="9" height="6" viewBox="0 0 9 6"><path d="M1.300 1.100L4.500 4.600L7.700 1.100" fill="none" stroke="#0000ff" stroke-width="1.350"/></svg></div><div class="c" style="left:701px"><svg class="ch2" width="9" height="10" viewBox="0 0 9 10"><path d="M1.300 1.100L4.500 4.600L7.700 1.100M1.300 5.100L4.500 8.600L7.700 5.100" fill="none" stroke="#0000ff" stroke-width="1.350"/></svg></div>
<div class="m" style="left:732px"></div><div class="c" style="left:853px"><svg class="ch" width="9" height="6" viewBox="0 0 9 6"><path d="M1.300 1.100L4.500 4.600L7.700 1.100" fill="none" stroke="#0000ff" stroke-width="1.350"/></svg></div><div class="c" style="left:884px"><svg class="ch2" width="9" height="10" viewBox="0 0 9 10"><path d="M1.300 1.100L4.500 4.600L7.700 1.100M1.300 5.100L4.500 8.600L7.700 5.100" fill="none" stroke="#0000ff" stroke-width="1.350"/></svg></div>
<div class="m" style="left:915px"><i class="cb"></i></div><div class="c" style="left:1036px"><svg class="ch" width="9" height="6" viewBox="0 0 9 6"><path d="M1.300 1.100L4.500 4.600L7.700 1.100" fill="none" stroke="#0000ff" stroke-width="1.350"/></svg></div><div class="c" style="left:1067px"><svg class="ch2" width="9" height="10" viewBox="0 0 9 10"><path d="M1.300 1.100L4.500 4.600L7.700 1.100M1.300 5.100L4.500 8.600L7.700 5.100" fill="none" stroke="#0000ff" stroke-width="1.350"/></svg></div>
<div class="m" style="left:1098px"><span class="v"></span></div><div class="c" style="left:1219px"><svg class="ch" width="9" height="6" viewBox="0 0 9 6"><path d="M1.300 1.100L4.500 4.600L7.700 1.100" fill="none" stroke="#0000ff" stroke-width="1.350"/></svg></div><div class="c" style="left:1250px"><svg class="ch2" width="9" height="10" viewBox="0 0 9 10"><path d="M1.300 1.100L4.500 4.600L7.700 1.100M1.300 5.100L4.500 8.600L7.700 5.100" fill="none" stroke="#0000ff" stroke-width="1.350"/></svg></div>
</div>
<div class="rrow alt" style="top:170px;height:26px">
<div class="m" style="left:0px"><span class="v">999 [Import Templ</span></div><div class="c" style="left:121px"><svg class="ch" width="9" height="6" viewBox="0 0 9 6"><path d="M1.300 1.100L4.500 4.600L7.700 1.100" fill="none" stroke="#0000ff" stroke-width="1.350"/></svg></div><div class="c" style="left:152px"><svg class="ch2" width="9" height="10" viewBox="0 0 9 10"><path d="M1.300 1.100L4.500 4.600L7.700 1.100M1.300 5.100L4.500 8.600L7.700 5.100" fill="none" stroke="#0000ff" stroke-width="1.350"/></svg></div>
<div class="m" style="left:183px"><span class="v">1 [DEFAULT SHIF</span></div><div class="c" style="left:304px"><svg class="ch" width="9" height="6" viewBox="0 0 9 6"><path d="M1.300 1.100L4.500 4.600L7.700 1.100" fill="none" stroke="#0000ff" stroke-width="1.350"/></svg></div><div class="c" style="left:335px"><svg class="ch2" width="9" height="10" viewBox="0 0 9 10"><path d="M1.300 1.100L4.500 4.600L7.700 1.100M1.300 5.100L4.500 8.600L7.700 5.100" fill="none" stroke="#0000ff" stroke-width="1.350"/></svg></div>
<div class="m" style="left:366px"><span class="v">1 [Default Holiday</span></div><div class="c" style="left:487px"><svg class="ch" width="9" height="6" viewBox="0 0 9 6"><path d="M1.300 1.100L4.500 4.600L7.700 1.100" fill="none" stroke="#0000ff" stroke-width="1.350"/></svg></div><div class="c" style="left:518px"><svg class="ch2" width="9" height="10" viewBox="0 0 9 10"><path d="M1.300 1.100L4.500 4.600L7.700 1.100M1.300 5.100L4.500 8.600L7.700 5.100" fill="none" stroke="#0000ff" stroke-width="1.350"/></svg></div>
<div class="m" style="left:549px"><span class="v">1 [FULL TIME]</span></div><div class="c" style="left:670px"><svg class="ch" width="9" height="6" viewBox="0 0 9 6"><path d="M1.300 1.100L4.500 4.600L7.700 1.100" fill="none" stroke="#0000ff" stroke-width="1.350"/></svg></div><div class="c" style="left:701px"><svg class="ch2" width="9" height="10" viewBox="0 0 9 10"><path d="M1.300 1.100L4.500 4.600L7.700 1.100M1.300 5.100L4.500 8.600L7.700 5.100" fill="none" stroke="#0000ff" stroke-width="1.350"/></svg></div>
<div class="m" style="left:732px"></div><div class="c" style="left:853px"><svg class="ch" width="9" height="6" viewBox="0 0 9 6"><path d="M1.300 1.100L4.500 4.600L7.700 1.100" fill="none" stroke="#0000ff" stroke-width="1.350"/></svg></div><div class="c" style="left:884px"><svg class="ch2" width="9" height="10" viewBox="0 0 9 10"><path d="M1.300 1.100L4.500 4.600L7.700 1.100M1.300 5.100L4.500 8.600L7.700 5.100" fill="none" stroke="#0000ff" stroke-width="1.350"/></svg></div>
<div class="m" style="left:915px"><i class="cb"></i></div><div class="c" style="left:1036px"><svg class="ch" width="9" height="6" viewBox="0 0 9 6"><path d="M1.300 1.100L4.500 4.600L7.700 1.100" fill="none" stroke="#0000ff" stroke-width="1.350"/></svg></div><div class="c" style="left:1067px"><svg class="ch2" width="9" height="10" viewBox="0 0 9 10"><path d="M1.300 1.100L4.500 4.600L7.700 1.100M1.300 5.100L4.500 8.600L7.700 5.100" fill="none" stroke="#0000ff" stroke-width="1.350"/></svg></div>
<div class="m" style="left:1098px"><span class="v"></span></div><div class="c" style="left:1219px"><svg class="ch" width="9" height="6" viewBox="0 0 9 6"><path d="M1.300 1.100L4.500 4.600L7.700 1.100" fill="none" stroke="#0000ff" stroke-width="1.350"/></svg></div><div class="c" style="left:1250px"><svg class="ch2" width="9" height="10" viewBox="0 0 9 10"><path d="M1.300 1.100L4.500 4.600L7.700 1.100M1.300 5.100L4.500 8.600L7.700 5.100" fill="none" stroke="#0000ff" stroke-width="1.350"/></svg></div>
</div>
<div class="gbot"></div><div class="gbot2"></div>
</div>
<div id="jobsel"><span>107 [Job 107</span><i></i></div>
<div id="dd"><div class="opts">
<div>&nbsp;</div>
<div>0 [Runner]</div>
<div>10 [8/40 Hour Job]</div>
<div>100 [DEFAULT JOB]</div>
<div>101 [Snow Plow]</div>
<div>102 [Job 102]</div>
<div>103 [Job 103]</div>
<div>104 [Job 104]</div>
<div>105 [Job 105]</div>
<div>106 [Job 106]</div>
<div class="hi">107 [Job 107]</div>
<div>108 [Job 108]</div>
<div>109 [Job 109]</div>
<div>11 [10/60 Hour Job]</div>
<div>110 [Job 110]</div>
<div>111 [Job 111]</div>
<div>12 [40 Hour Job]</div>
<div>15 [Maintenance]</div>
<div>151 [Trimming]</div>
</div><div class="sb"><i class="u"></i><b></b><i class="dn"></i></div></div>
</body></html>
